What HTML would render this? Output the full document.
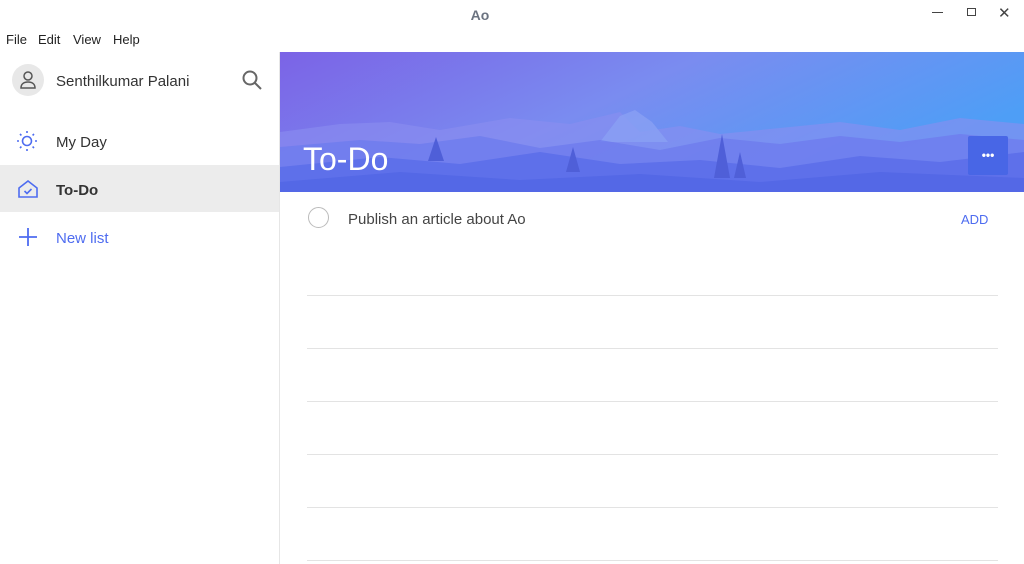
<!DOCTYPE html>
<html><head><meta charset="utf-8"><style>
*{margin:0;padding:0;box-sizing:border-box}
body{width:1024px;height:564px;overflow:hidden;background:#fff;font-family:"Liberation Sans",sans-serif;position:relative;color:#333}
.abs{position:absolute}
.m{position:absolute;top:32px;font-size:13px;color:#222}
</style></head><body>
<div class="abs" style="left:0;top:1px;width:960px;height:28px;text-align:center;line-height:28px;font-size:14px;font-weight:bold;color:#6b7380">Ao</div>
<div class="abs" style="left:932px;top:12px;width:11px;height:1px;background:#444"></div>
<div class="abs" style="left:967px;top:8px;width:9px;height:8px;border:1px solid #444"></div>
<div class="abs" style="left:998px;top:4px;font-size:15px;color:#444">✕</div>
<span class="m" style="left:6px">File</span><span class="m" style="left:38px">Edit</span><span class="m" style="left:73px">View</span><span class="m" style="left:113px">Help</span>
<!-- sidebar -->
<div class="abs" style="left:279px;top:52px;width:1px;height:512px;background:#e6e6e6"></div>
<div class="abs" style="left:12px;top:64px;width:32px;height:32px;border-radius:50%;background:#e8e8e8"></div>
<svg class="abs" style="left:19px;top:70px" width="18" height="20" viewBox="0 0 18 20" fill="none" stroke="#555" stroke-width="1.5"><circle cx="9" cy="6" r="4"/><path d="M2 18c0-4 3-6 7-6s7 2 7 6z"/></svg>
<div class="abs" style="left:56px;top:73px;font-size:15px;color:#333">Senthilkumar Palani</div>
<svg class="abs" style="left:242px;top:70px" width="20" height="20" viewBox="0 0 20 20" fill="none" stroke="#666" stroke-width="2"><circle cx="8" cy="8" r="6.5"/><path d="M13 13l6 6"/></svg>
<svg class="abs" style="left:16px;top:130px" width="22" height="22" viewBox="0 0 22 22" fill="none" stroke="#4e6cf0" stroke-width="1.6"><circle cx="11" cy="11" r="4.5"/><path d="M11 1v2M11 19v2M1 11h2M19 11h2M4 4l1.4 1.4M16.6 16.6L18 18M4 18l1.4-1.4M16.6 5.4L18 4"/></svg>
<div class="abs" style="left:56px;top:134px;font-size:15px;color:#333">My Day</div>
<div class="abs" style="left:0;top:165px;width:279px;height:47px;background:#ececec"></div>
<svg class="abs" style="left:17px;top:178px" width="22" height="22" viewBox="0 0 22 22" fill="none" stroke="#4e6cf0" stroke-width="1.6"><path d="M2 10L11 3l9 7v9H2z"/><path d="M7.5 13l2.5 2.5 4.5-4.5"/></svg>
<div class="abs" style="left:56px;top:182px;font-size:15px;font-weight:bold;color:#333">To-Do</div>
<svg class="abs" style="left:17px;top:226px" width="22" height="22" viewBox="0 0 22 22" stroke="#4e6cf0" stroke-width="1.8"><path d="M11 2v18M2 11h18"/></svg>
<div class="abs" style="left:56px;top:230px;font-size:15px;color:#4e6cf0">New list</div>
<!-- banner -->
<svg class="abs" style="left:280px;top:52px" width="744" height="140" viewBox="0 0 744 140">
<defs><linearGradient id="g" x1="0" y1="0" x2="1" y2="0.4"><stop offset="0" stop-color="#7b63e6"/><stop offset="0.5" stop-color="#7a8cf0"/><stop offset="1" stop-color="#4e9ef6"/></linearGradient></defs>
<rect width="744" height="140" fill="url(#g)"/>
<path d="M0 80L60 72 110 70 160 78 230 66 290 72 340 60 360 80 400 74 440 82 500 76 560 70 620 78 680 66 744 72V140H0z" fill="#8a8df0" opacity=".6"/>
<path d="M320 90L340 64 355 58 372 70 388 90z" fill="#8aa0f4" opacity=".8"/>
<path d="M0 95L80 88 140 92 200 84 260 96 320 88 380 98 440 86 500 92 560 84 620 90 680 82 744 88V140H0z" fill="#6e7cee" opacity=".8"/>
<path d="M0 115L100 105 180 112 260 100 340 112 420 108 500 116 580 104 660 110 744 100V140H0z" fill="#5e70ea"/>
<path d="M0 130L120 120 240 128 360 122 480 130 600 120 744 126V140H0z" fill="#5468e6"/>
<path d="M156 85l-8 24h16z M293 95l-7 25h14z M442 82l-8 44h16z M460 100l-6 26h12z" fill="#4f5fd8"/>
<rect x="688" y="84" width="40" height="39" rx="2" fill="#4866e6"/>
<text x="23" y="118" font-family="Liberation Sans" font-size="32" fill="#fff">To-Do</text>
<text x="708" y="107" text-anchor="middle" font-family="Liberation Sans" font-size="12" font-weight="bold" fill="#fff">•••</text>
</svg>
<!-- task -->
<div class="abs" style="left:308px;top:207px;width:21px;height:21px;border-radius:50%;border:1.5px solid #bbb"></div>
<div class="abs" style="left:348px;top:211px;font-size:15px;color:#444">Publish an article about Ao</div>
<div class="abs" style="left:961px;top:212px;font-size:13px;color:#4e6cf0">ADD</div>
<div class="abs" style="left:307px;top:295px;width:691px;height:1px;background:#e3e3e3"></div>
<div class="abs" style="left:307px;top:348px;width:691px;height:1px;background:#e3e3e3"></div>
<div class="abs" style="left:307px;top:401px;width:691px;height:1px;background:#e3e3e3"></div>
<div class="abs" style="left:307px;top:454px;width:691px;height:1px;background:#e3e3e3"></div>
<div class="abs" style="left:307px;top:507px;width:691px;height:1px;background:#e3e3e3"></div>
<div class="abs" style="left:307px;top:560px;width:691px;height:1px;background:#e3e3e3"></div>
</body></html>
